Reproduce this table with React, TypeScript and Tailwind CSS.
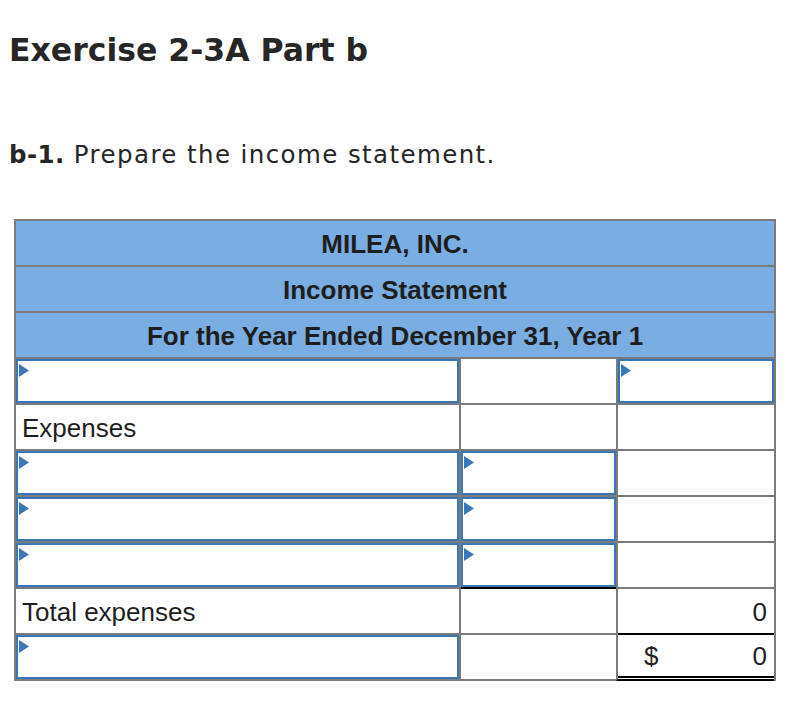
import React from 'react'

const GRAY = 'border-[#7b7b7b]'

interface CellProps {
  input?: boolean
  marker?: boolean
  className?: string
  children?: React.ReactNode
}

const Marker: React.FC = () => (
  <svg
    className="absolute left-[1px] top-[3px]"
    width="10"
    height="13"
    viewBox="0 0 10 13"
  >
    <polygon points="0,0 10,6.5 0,13" fill="#3a77b8" />
  </svg>
)

const Cell: React.FC<CellProps> = ({ input, marker, className = '', children }) => (
  <div className={`relative flex h-[46px] border-t-2 ${className}`}>
    {input ? (
      <div className="relative h-full w-full border-2 border-[#3a77b8] bg-white">
        {marker ? <Marker /> : null}
      </div>
    ) : (
      children
    )}
  </div>
)

const HeaderRow: React.FC<{ text: string }> = ({ text }) => (
  <div
    className={`flex h-[46px] items-center justify-center border-t-2 ${GRAY} bg-[#7aade1] pt-[2px] text-[26px] font-bold text-[#1e1e1e]`}
  >
    {text}
  </div>
)

type Row = {
  c1: CellProps
  c2: CellProps
  c3: CellProps
}

const rows: Row[] = [
  { c1: { input: true, marker: true }, c2: {}, c3: { input: true, marker: true } },
  {
    c1: { children: <span className="self-center pl-[6px] pt-[2px]">Expenses</span> },
    c2: {},
    c3: {},
  },
  { c1: { input: true, marker: true }, c2: { input: true, marker: true }, c3: {} },
  { c1: { input: true, marker: true }, c2: { input: true, marker: true }, c3: {} },
  { c1: { input: true, marker: true }, c2: { input: true, marker: true }, c3: {} },
  {
    c1: { children: <span className="self-center pl-[6px] pt-[2px]">Total expenses</span> },
    c2: { className: '!border-t-black' },
    c3: { children: <span className="ml-auto self-center pr-[7px] pt-[2px]">0</span> },
  },
]

export default function App() {
  return (
    <div className="min-h-screen bg-white pl-[9px] pt-[30px] text-[#262626] [font-family:'DejaVu_Sans',sans-serif]">
      <h1 className="text-[31.5px] font-bold leading-[40px]">Exercise 2-3A Part b</h1>
      <p className="mt-[70px] text-[24.5px] leading-[30px] tracking-[1.4px]">
        <span className="font-bold tracking-[0.4px]">b-1.</span> Prepare the income statement.
      </p>

      <div
        className={`ml-[5px] mt-[49px] w-[762px] border-x-2 ${GRAY} text-[26px] tracking-normal text-[#1e1e1e] [font-family:'Liberation_Sans',Arial,sans-serif]`}
      >
        <HeaderRow text="MILEA, INC." />
        <HeaderRow text="Income Statement" />
        <HeaderRow text="For the Year Ended December 31, Year 1" />

        {rows.map((row, i) => (
          <div key={i} className="flex">
            <div className="w-[443px]">
              <Cell {...row.c1} className={`${GRAY} ${row.c1.className ?? ''}`} />
            </div>
            <div className={`w-[157px] border-l-2 ${GRAY}`}>
              <Cell {...row.c2} className={`${GRAY} ${row.c2.className ?? ''}`} />
            </div>
            <div className={`flex-1 border-l-2 ${GRAY}`}>
              <Cell {...row.c3} className={`${GRAY} ${row.c3.className ?? ''}`} />
            </div>
          </div>
        ))}

        {/* net income row */}
        <div className="flex">
          <div className={`w-[443px] border-b-2 ${GRAY}`}>
            <Cell input marker className={GRAY} />
          </div>
          <div className={`w-[157px] border-b-2 border-l-2 ${GRAY}`}>
            <Cell className={GRAY} />
          </div>
          <div className={`flex-1 border-l-2 ${GRAY} border-b-2 !border-b-black`}>
            <div className="flex h-[46px] flex-col border-t-2 border-black">
              <div className="mb-[2px] flex flex-1 items-center justify-between border-b-2 border-black pl-[26px] pr-[7px] pt-[2px]">
                <span>$</span>
                <span>0</span>
              </div>
            </div>
          </div>
        </div>
      </div>
    </div>
  )
}
